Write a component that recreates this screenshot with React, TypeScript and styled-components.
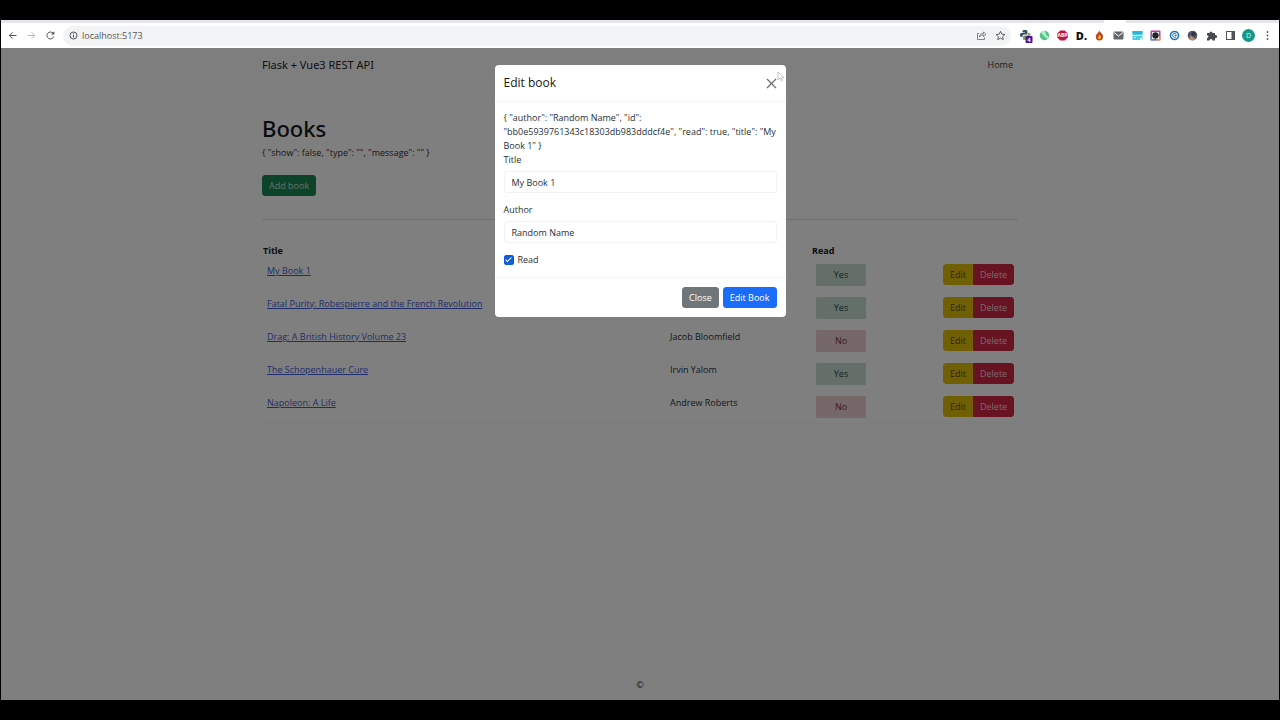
import React, { useState } from "react";
import styled, { createGlobalStyle, css } from "styled-components";

const GlobalStyle = createGlobalStyle`
  *, *::before, *::after { box-sizing: border-box; }
  body {
    margin: 0;
    background: #000;
    color: #2b2f33;
    font-family: "Open Sans", "Noto Sans", sans-serif;
    font-size: 9px;
    line-height: 14px;
  }
  button, input { font: inherit; color: inherit; }
`;

const Screen = styled.div`
  min-height: 100vh;
  padding: 20px 1px;
  display: flex;
  flex-direction: column;
`;

const TabStrip = styled.div`
  height: 3px;
  background: #e3e5e8;
  display: flex;
  justify-content: flex-end;
  padding-right: 153px;
`;

const ActiveTab = styled.div`
  width: 22px;
  background: #fff;
`;

const Toolbar = styled.header`
  height: 25px;
  background: #fff;
  display: flex;
  align-items: center;
  gap: 6px;
  padding: 0 5px;
`;

const IconButton = styled.button<{ $faded?: boolean }>`
  flex: none;
  width: 13px;
  height: 13px;
  padding: 0;
  border: 0;
  background: none;
  display: grid;
  place-items: center;
  opacity: ${(p) => (p.$faded ? 0.4 : 1)};
  svg { display: block; overflow: visible; }
`;

const Omnibox = styled.div`
  flex: 1;
  height: 20px;
  border-radius: 10px;
  background: #f1f3f4;
  display: flex;
  align-items: center;
  gap: 6px;
  padding: 0 4px;
`;

const Address = styled.input`
  flex: 1;
  min-width: 0;
  border: 0;
  padding: 0;
  margin-left: -4px;
  background: none;
  outline: none;
  color: #55585c;
  height: 14px;
`;

const Extensions = styled.div`
  width: 255px;
  display: flex;
  justify-content: space-between;
  margin-left: 2px;
`;

const Viewport = styled.div`
  flex: 1;
  position: relative;
  background: #fff;
  display: flex;
  flex-direction: column;
`;

const Container = styled.div`
  width: 100%;
  max-width: 770px;
  margin: 0 auto;
  padding: 0 7px;
`;

const Navbar = styled.nav`
  background: #fcfcfd;
  padding: 9px 0;
`;

const NavRow = styled(Container)`
  display: flex;
  justify-content: space-between;
  align-items: center;
  padding-right: 12px;
`;

const Brand = styled.a`
  font-family: "Noto Sans", sans-serif;
  font-size: 11px;
  line-height: 16px;
  color: #212529;
  text-decoration: none;
`;

const NavLink = styled.a`
  color: #3c3f42;
  text-decoration: none;
`;

const Main = styled(Container).attrs({ as: "main" })`
  flex: 1;
  padding-top: 32px;
`;

const Heading = styled.h1`
  margin: 0 0 4px;
  font-family: "Noto Sans", sans-serif;
  font-size: 22px;
  line-height: 28px;
  font-weight: 500;
  color: #15181b;
`;

const Dump = styled.p`
  margin: 0;
`;

const variants = {
  success: css`background: #198754; border-color: #198754; color: #c4e2d2;`,
  warning: css`background: #e3bf0c; border-color: #e3bf0c; color: #5c4b08;`,
  danger: css`background: #cf2744; border-color: #cf2744; color: #f6d3da;`,
  secondary: css`background: #70757a; border-color: #70757a; color: #fff;`,
  primary: css`background: #1a6dfa; border-color: #1a6dfa; color: #fff;`,
};

const Button = styled.button<{ $variant: keyof typeof variants }>`
  height: 21px;
  padding: 0 6px;
  border: 1px solid;
  border-radius: 3px;
  line-height: 19px;
  cursor: pointer;
  ${(p) => variants[p.$variant]}
`;

const Actions = styled.div`
  margin-top: 15px;
  display: flex;
`;

const Rule = styled.hr`
  margin: 23px 0 24px;
  border: 0;
  border-top: 1px solid #dfe0e1;
`;

const Table = styled.table`
  width: 100%;
  table-layout: fixed;
  border-collapse: separate;
  border-spacing: 0;
  th { text-align: left; vertical-align: top; padding: 0 1px; height: 15px; font-weight: 700; color: #15181b; }
  td { vertical-align: top; height: 33px; padding: 5px; border-bottom: 1px solid #f9f9fa; }
`;

const Column = styled.col<{ $width?: number }>`
  ${(p) => p.$width && css`width: ${p.$width}px;`}
`;

const BookLink = styled.a`
  color: #3f5cd6;
`;

const Status = styled.div<{ $read: boolean }>`
  width: 50px;
  height: 22px;
  line-height: 22px;
  text-align: center;
  border-radius: 1px;
  background: ${(p) => (p.$read ? "#c9dfd3" : "#ecced1")};
  color: ${(p) => (p.$read ? "#26493a" : "#7a3037")};
`;

const ButtonGroup = styled.div`
  display: flex;
  button:first-child { border-top-right-radius: 0; border-bottom-right-radius: 0; }
  button:last-child { border-top-left-radius: 0; border-bottom-left-radius: 0; }
`;

const Footer = styled.footer`
  padding: 8px;
  text-align: center;
`;

const Backdrop = styled.div`
  position: absolute;
  inset: 0;
  background: rgba(0, 0, 0, 0.5);
  padding-top: 17px;
`;

const Dialog = styled.form`
  position: relative;
  max-width: 291px;
  margin: 0 auto;
  background: #fff;
  border-radius: 4px;
`;

const DialogHeader = styled.div`
  display: flex;
  justify-content: space-between;
  align-items: center;
  padding: 10px 8px 10px 9px;
  border-bottom: 1px solid #f4f5f6;
`;

const DialogTitle = styled.h2`
  margin: 0;
  font-size: 12px;
  line-height: 16px;
  font-weight: 500;
  color: #15181b;
`;

const DialogBody = styled.div`
  padding: 9px 9px 10px;
`;

const Field = styled.div`
  display: flex;
  flex-direction: column;
  gap: 4px;
  margin-bottom: 10px;
`;

const TextInput = styled.input`
  width: 100%;
  height: 22px;
  padding: 0 7px;
  border: 1px solid #f1f2f4;
  border-radius: 3px;
  background: #fff;
`;

const CheckLabel = styled.label`
  display: flex;
  align-items: center;
  gap: 4px;
`;

const Checkbox = styled.input`
  appearance: none;
  width: 10px;
  height: 10px;
  margin: 0;
  border: 1px solid #adb5bd;
  border-radius: 2px;
  display: grid;
  place-items: center;
  &:checked { background: #0d5fd8; border-color: #0d5fd8; }
  &:checked::after {
    content: "";
    width: 3px;
    height: 6px;
    margin-bottom: 2px;
    border: solid #fff;
    border-width: 0 1px 1px 0;
    transform: rotate(45deg);
  }
`;

const DialogFooter = styled.div`
  display: flex;
  justify-content: flex-end;
  gap: 4px;
  padding: 9px;
  border-top: 1px solid #f4f5f6;
`;

const Pointer = styled.svg`
  position: absolute;
  top: 6px;
  right: 1px;
`;

const books = [
  { title: "My Book 1", author: "Random Name", read: true },
  { title: "Fatal Purity: Robespierre and the French Revolution", author: "", read: true },
  { title: "Drag: A British History Volume 23", author: "Jacob Bloomfield", read: false },
  { title: "The Schopenhauer Cure", author: "Irvin Yalom", read: true },
  { title: "Napoleon: A Life", author: "Andrew Roberts", read: false },
];

const Glyph = ({ children, size = 13 }: { children: React.ReactNode; size?: number }) => (
  <svg width={size} height={size} viewBox="0 0 13 13" fill="none" stroke="#50545a" aria-hidden="true">
    {children}
  </svg>
);

const extensions: { name: string; art: React.ReactNode }[] = [
  {
    name: "Python",
    art: (
      <g stroke="none">
        <path d="M3.500 2q0-1 1.500-1h2q1.500 0 1.500 1.500v2q0 1-1 1H5q-1.500 0-1.500 1.500v1H2.300Q1 8 1 6t1.300-2H6v-.5H3.500z" fill="#34505e" />
        <path d="M9 4h1q1.500 0 1.500 2L6.500 11H5q-1 0-1-1V8q0-1.500 1.500-1.500H8Q9 6.500 9 5.500z" fill="#8f9a45" />
        <rect x="6.500" y="7" width="7" height="7" rx="1" fill="#4a1496" />
        <text x="10" y="12.500" fontSize="6" fontWeight="700" fill="#fff" textAnchor="middle">4</text>
      </g>
    ),
  },
  { name: "Globe", art: <g stroke="none"><circle cx="6.500" cy="6.500" r="4.700" fill="#4fc487" /><path d="M3 3.300q3-2.500 4.500-.3L8 6l2.500 1.500-1 2.500Q6 8 3 3.300z" fill="#b9ebcf" /></g> },
  { name: "AdBlock", art: <g stroke="none"><path d="M4.300 1.500h4.400l3 3v4l-3 3H4.300l-3-3v-4z" fill="#c4123f" /><text x="6.500" y="8.300" fontSize="5" fontWeight="700" fill="#fff" textAnchor="middle">ABP</text></g> },
  { name: "D", art: <text x="6.500" y="10.500" fontSize="11" fontWeight="800" stroke="none" fill="#111" textAnchor="middle">D.</text> },
  { name: "Flame", art: <g stroke="none"><path d="M6 1.500c1 2 4 3 4 6a3.600 4 0 0 1-7.200 0C2.800 5 6 4 6 1.500z" fill="#b5471f" /><path d="M6.500 5.500c1.500 1.500 1.500 2 1.500 3a1.500 1.500 0 0 1-3 0c0-1 1-1.500 1.500-3z" fill="#f7b23b" /></g> },
  { name: "Mail", art: <g><rect x="1.500" y="2.500" width="10" height="8" rx="1" fill="#63676b" stroke="none" /><path d="M2 3.500l4.500 3.500L11 3.500" stroke="#fff" /></g> },
  { name: "Window", art: <g stroke="none"><rect x="1.500" y="2" width="10" height="9" fill="#49cdec" /><rect x="1.500" y="2" width="10" height="3" fill="#2ab3d8" /><path d="M1.500 6h10v1h-10zM3 8h2v1H3zM9 9h2v2H9z" fill="#d5f6fd" /></g> },
  { name: "Camera", art: <g stroke="none"><rect x="1.500" y="1.500" width="10" height="10" rx="1" fill="#c63aa0" /><path d="M1.500 6v5.500h5z" fill="#2ea5dc" /><path d="M11.500 6v5.500h-5z" fill="#eba233" /><rect x="3" y="3" width="7" height="7" fill="#fff" /><circle cx="6.500" cy="6.500" r="3.200" fill="#25262d" /></g> },
  { name: "Clock", art: <g><circle cx="6.500" cy="6.500" r="4" fill="#fff" stroke="#1d78c1" strokeWidth="1.600" /><path d="M8.300 5.300A2 2 0 1 0 8.300 7.500M6.500 6.500h2" stroke="#1d78c1" /></g> },
  { name: "Profile", art: <g stroke="none"><circle cx="6.500" cy="6.500" r="4.800" fill="#4e5566" /><path d="M3.500 10.500C3 7 5 6 6 7.500s3 1 3.500 3q-3 2-6 0z" fill="#b78a68" /><circle cx="7.500" cy="5" r="2" fill="#303440" /></g> },
  { name: "Extensions", art: <path d="M2 4h2.500a1.500 1.500 0 1 1 3 0H10v2.200a1.500 1.500 0 1 1 0 2.800v2.500H7.500a1.300 1.300 0 0 0-3 0H2V9a1.400 1.400 0 0 0 0-2.800z" fill="#484c51" stroke="none" /> },
  { name: "Side panel", art: <g><rect x="2.500" y="2.500" width="8" height="8" /><rect x="8" y="2.500" width="2.500" height="8" fill="#50545a" /></g> },
];

export default function App() {
  const [open, setOpen] = useState(true);
  const [title, setTitle] = useState("My Book 1");
  const [author, setAuthor] = useState("Random Name");
  const [read, setRead] = useState(true);
  const [url, setUrl] = useState("localhost:5173");

  return (
    <Screen>
      <GlobalStyle />
      <TabStrip><ActiveTab /></TabStrip>
      <Toolbar>
        <IconButton aria-label="Back"><Glyph><path d="M10.500 6.500H3.500M6.500 3.300L3.300 6.500 6.500 9.700" /></Glyph></IconButton>
        <IconButton aria-label="Forward" $faded><Glyph><path d="M2.500 6.500H9.500M6.500 3.300L9.700 6.500 6.500 9.700" /></Glyph></IconButton>
        <IconButton aria-label="Reload"><Glyph><path d="M9.200 4.300A3.500 3.500 0 1 0 9.800 7.500" /><path d="M10.300 2.300v3.300H7z" fill="#50545a" stroke="none" /></Glyph></IconButton>
        <Omnibox>
          <IconButton aria-label="Site information"><Glyph><circle cx="6.500" cy="6.500" r="3.500" /><path d="M6.500 6v2.500M6.500 4.300v1" /></Glyph></IconButton>
          <Address aria-label="Address" value={url} onChange={(e) => setUrl(e.target.value)} />
          <IconButton aria-label="Share"><Glyph><path d="M4 4.500H2.500v6h7V8.500M4.500 8c0-2.500 1.500-3.500 4-3.500V3L11 5.300 8.500 7.500V6C6.500 6 5.500 6.500 4.500 8z" strokeWidth="0.700" /></Glyph></IconButton>
          <IconButton aria-label="Bookmark"><Glyph><path d="M6.500 2.300l1.300 2.900 3.100.3-2.300 2.100.7 3.100-2.800-1.600-2.800 1.600.7-3.100-2.300-2.100 3.100-.3z" strokeWidth="0.900" /></Glyph></IconButton>
        </Omnibox>
        <Extensions>
          {extensions.map((e) => (
            <IconButton key={e.name} aria-label={e.name}><Glyph>{e.art}</Glyph></IconButton>
          ))}
          <IconButton aria-label="Account"><Glyph><circle cx="6.500" cy="6.500" r="6.500" fill="#12998c" stroke="none" /><text x="6.500" y="9" fontSize="7" fill="#d6f5f0" stroke="none" textAnchor="middle">D</text></Glyph></IconButton>
          <IconButton aria-label="Menu"><Glyph><g fill="#50545a" stroke="none"><circle cx="6.500" cy="3" r="0.900" /><circle cx="6.500" cy="6.500" r="0.900" /><circle cx="6.500" cy="10" r="0.900" /></g></Glyph></IconButton>
        </Extensions>
      </Toolbar>

      <Viewport>
        <Navbar>
          <NavRow>
            <Brand href="#">Flask + Vue3 REST API</Brand>
            <NavLink href="#">Home</NavLink>
          </NavRow>
        </Navbar>
        <Main>
          <Heading>Books</Heading>
          <Dump>{'{ "show": false, "type": "", "message": "" }'}</Dump>
          <Actions>
            <Button $variant="success" onClick={() => setOpen(true)}>Add book</Button>
          </Actions>
          <Rule />
          <Table>
            <colgroup>
              <Column />
              <Column $width={146} />
              <Column $width={127} />
              <Column $width={80} />
            </colgroup>
            <thead>
              <tr><th>Title</th><th>Author</th><th>Read</th><th /></tr>
            </thead>
            <tbody>
              {books.map((b) => (
                <tr key={b.title}>
                  <td><BookLink href="#">{b.title}</BookLink></td>
                  <td>{b.author}</td>
                  <td><Status $read={b.read}>{b.read ? "Yes" : "No"}</Status></td>
                  <td>
                    <ButtonGroup>
                      <Button $variant="warning" onClick={() => setOpen(true)}>Edit</Button>
                      <Button $variant="danger">Delete</Button>
                    </ButtonGroup>
                  </td>
                </tr>
              ))}
            </tbody>
          </Table>
        </Main>
        <Footer>©</Footer>

        {open && (
          <Backdrop>
            <Dialog role="dialog" aria-labelledby="edit-title" onSubmit={(e) => e.preventDefault()}>
              <DialogHeader>
                <DialogTitle id="edit-title">Edit book</DialogTitle>
                <IconButton type="button" aria-label="Close dialog" onClick={() => setOpen(false)}>
                  <Glyph><path d="M2 2l9 9M11 2l-9 9" stroke="#6a6d70" strokeWidth="1.200" /></Glyph>
                </IconButton>
              </DialogHeader>
              <DialogBody>
                <Dump>{'{ "author": "Random Name", "id": "bb0e5939761343c18303db983dddcf4e", "read": true, "title": "My Book 1" }'}</Dump>
                <Field>
                  <label htmlFor="book-title">Title</label>
                  <TextInput id="book-title" value={title} onChange={(e) => setTitle(e.target.value)} />
                </Field>
                <Field>
                  <label htmlFor="book-author">Author</label>
                  <TextInput id="book-author" value={author} onChange={(e) => setAuthor(e.target.value)} />
                </Field>
                <CheckLabel>
                  <Checkbox type="checkbox" checked={read} onChange={(e) => setRead(e.target.checked)} />
                  Read
                </CheckLabel>
              </DialogBody>
              <DialogFooter>
                <Button type="button" $variant="secondary" onClick={() => setOpen(false)}>Close</Button>
                <Button type="submit" $variant="primary">Edit Book</Button>
              </DialogFooter>
              <Pointer width="8" height="12" viewBox="0 0 8 12" fill="#fff" stroke="#b9b9b9" strokeWidth="0.800" aria-hidden="true">
                <path d="M1 1v8l2-2 1.500 3 1-.5L4.300 6.700H7z" />
              </Pointer>
            </Dialog>
          </Backdrop>
        )}
      </Viewport>
    </Screen>
  );
}
